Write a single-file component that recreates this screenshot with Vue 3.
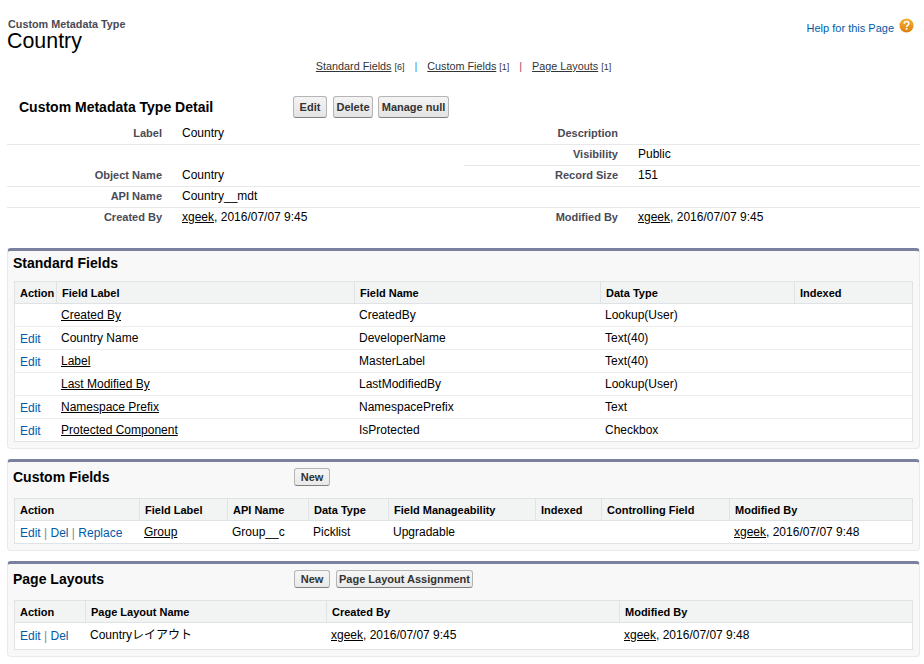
<template>
  <div class="page">
    <div class="page-head">
      <div class="titles">
        <div class="type-name">Custom Metadata Type</div>
        <h1>Country</h1>
      </div>
      <a class="help">
        Help for this Page
        <svg width="15" height="15" viewBox="0 0 16 16">
          <defs>
            <linearGradient id="helpfill" x1="0" y1="0" x2="0" y2="1">
              <stop offset="0" stop-color="#f5b335" />
              <stop offset="1" stop-color="#dc7f0c" />
            </linearGradient>
          </defs>
          <circle cx="8" cy="8" r="7.5" fill="url(#helpfill)" />
          <path d="M5.6 6.2c0-1.5 1.1-2.4 2.5-2.4s2.4.9 2.4 2.1c0 1.9-2.4 1.9-2.4 3.7" fill="none" stroke="#fff" stroke-width="1.7" />
          <rect x="7.1" y="10.6" width="1.9" height="1.9" fill="#fff" />
        </svg>
      </a>
    </div>

    <div class="jump">
      <span><a>Standard Fields</a> <small>[6]</small></span>
      <i class="sep">|</i>
      <span><a>Custom Fields</a> <small>[1]</small></span>
      <i class="sep red">|</i>
      <span><a>Page Layouts</a> <small>[1]</small></span>
    </div>

    <div class="detail-head">
      <h2>Custom Metadata Type Detail</h2>
      <div class="btns">
        <button>Edit</button>
        <button>Delete</button>
        <button>Manage null</button>
      </div>
    </div>

    <div class="detail">
      <div v-for="row in detailRows" :key="row.left[0] + row.right[0]" class="detail-row">
        <div class="cell" :class="{ line: row.leftLine }">
          <span class="lbl">{{ row.left[0] }}</span>
          <span class="val">
            <template v-if="row.left[2]"><a>xgeek</a>, </template>{{ row.left[1] }}
          </span>
        </div>
        <div class="cell right" :class="{ line: row.rightLine }">
          <span class="lbl">{{ row.right[0] }}</span>
          <span class="val">
            <template v-if="row.right[2]"><a>xgeek</a>, </template>{{ row.right[1] }}
          </span>
        </div>
      </div>
    </div>

    <section v-for="p in panels" :key="p.title" class="panel" :class="p.cls">
      <div class="panel-head">
        <h3>{{ p.title }}</h3>
        <div v-if="p.buttons" class="panel-btns">
          <button v-for="b in p.buttons" :key="b">{{ b }}</button>
        </div>
      </div>
      <div class="grid" :style="{ gridTemplateColumns: p.cols }">
        <div v-for="h in p.headers" :key="h" class="th">{{ h }}</div>
        <template v-for="(row, i) in p.rows" :key="i">
          <div
            v-for="(c, j) in row"
            :key="j"
            class="td"
            :class="{ last: i === p.rows.length - 1, 'td-actions': c.actions }"
          >
            <template v-if="c.actions">
              <template v-for="(a, k) in c.actions" :key="a">
                <span v-if="k > 0" class="pipe"> | </span><a class="act">{{ a }}</a>
              </template>
            </template>
            <template v-else>
              <a v-if="c.ul" class="ul">{{ c.ul }}</a>{{ c.text }}
            </template>
          </div>
        </template>
      </div>
    </section>
  </div>
</template>

<script setup>
const detailRows = [
  { left: ['Label', 'Country'], right: ['Description', ''], leftLine: true, rightLine: true },
  { left: ['', ''], right: ['Visibility', 'Public'], leftLine: false, rightLine: true },
  { left: ['Object Name', 'Country'], right: ['Record Size', '151'], leftLine: true, rightLine: true },
  { left: ['API Name', 'Country__mdt'], right: ['', ''], leftLine: true, rightLine: true },
  { left: ['Created By', '2016/07/07 9:45', true], right: ['Modified By', '2016/07/07 9:45', true] }
]

const t = (text) => ({ text })
const u = (ul) => ({ ul })
const empty = t('')
const edit = { actions: ['Edit'] }
const user = (time) => ({ ul: 'xgeek', text: ', 2016/07/07 ' + time })

const panels = [
  {
    title: 'Standard Fields',
    cls: 'standard',
    cols: '41px 298px 246px 194px 1fr',
    headers: ['Action', 'Field Label', 'Field Name', 'Data Type', 'Indexed'],
    rows: [
      [empty, u('Created By'), t('CreatedBy'), t('Lookup(User)'), empty],
      [edit, t('Country Name'), t('DeveloperName'), t('Text(40)'), empty],
      [edit, u('Label'), t('MasterLabel'), t('Text(40)'), empty],
      [empty, u('Last Modified By'), t('LastModifiedBy'), t('Lookup(User)'), empty],
      [edit, u('Namespace Prefix'), t('NamespacePrefix'), t('Text'), empty],
      [edit, u('Protected Component'), t('IsProtected'), t('Checkbox'), empty]
    ]
  },
  {
    title: 'Custom Fields',
    cls: 'custom',
    buttons: ['New'],
    cols: '124px 88px 81px 80px 147px 66px 128px 1fr',
    headers: ['Action', 'Field Label', 'API Name', 'Data Type', 'Field Manageability', 'Indexed', 'Controlling Field', 'Modified By'],
    rows: [
      [{ actions: ['Edit', 'Del', 'Replace'] }, u('Group'), t('Group__c'), t('Picklist'), t('Upgradable'), empty, empty, user('9:48')]
    ]
  },
  {
    title: 'Page Layouts',
    cls: 'layouts',
    buttons: ['New', 'Page Layout Assignment'],
    cols: '70px 241px 293px 1fr',
    headers: ['Action', 'Page Layout Name', 'Created By', 'Modified By'],
    rows: [
      [{ actions: ['Edit', 'Del'] }, t('Countryレイアウト'), user('9:45'), user('9:48')]
    ]
  }
]
</script>

<style>
body {
  background: #fff;
}
</style>

<style scoped>
.page {
  width: 924px;
  height: 664px;
  overflow: hidden;
  box-sizing: border-box;
  padding: 18px 4px 0 7px;
  font-family: "Liberation Sans", "Noto Sans CJK JP", sans-serif;
  font-size: 12px;
  color: #000;
}

.page-head {
  display: flex;
  justify-content: space-between;
  height: 36px;
}

.type-name {
  font-size: 10.8px;
  font-weight: bold;
  line-height: 12px;
  color: #4a4a56;
  padding-left: 1px;
}

h1 {
  margin: 0;
  font-size: 21.4px;
  font-weight: normal;
  line-height: 23px;
}

.help {
  display: flex;
  align-items: flex-start;
  gap: 5px;
  color: #015ba7;
  font-size: 11px;
  line-height: 20px;
  margin-right: 6px;
}

.jump {
  display: flex;
  justify-content: center;
  align-items: center;
  height: 14px;
  margin-top: 5px;
  font-size: 10.8px;
  color: #333435;
}

.jump a {
  text-decoration: underline;
}

.jump small {
  font-size: 9px;
}

.sep {
  font-style: normal;
  color: #3c88c4;
  margin: 0 10px;
}

.sep.red {
  color: #a34b5c;
}

.detail-head {
  display: flex;
  align-items: center;
  height: 22px;
  margin-top: 23px;
  padding-left: 12px;
}

h2 {
  margin: 0;
  width: 274px;
  font-size: 14px;
  font-weight: bold;
}

.btns,
.panel-btns {
  display: flex;
  gap: 6px;
}

button {
  height: 22px;
  padding: 0;
  border: 1px solid #b5b5b5;
  border-bottom-color: #7f7f7f;
  border-radius: 3px;
  background: linear-gradient(#f4f4f4, #e4e4e4);
  font-family: inherit;
  font-size: 11px;
  font-weight: bold;
  color: #333;
  white-space: nowrap;
}

.btns button:nth-child(1) {
  width: 34px;
}

.btns button:nth-child(2) {
  width: 40px;
}

.btns button:nth-child(3) {
  width: 71px;
  margin-left: -1px;
}

.detail {
  margin-top: 6px;
  width: 913px;
}

.detail-row {
  display: grid;
  grid-template-columns: 457px 456px;
}

.cell {
  display: flex;
  height: 21px;
  box-sizing: border-box;
  align-items: flex-start;
}

.cell.line {
  border-bottom: 1px solid #e8e8e8;
}

.lbl {
  width: 155px;
  text-align: right;
  font-size: 11px;
  font-weight: bold;
  line-height: 18px;
  color: #4a4a56;
  flex: none;
}

.val {
  margin-left: 20px;
  line-height: 19px;
}

.right .lbl {
  width: 154px;
}

.val a,
.ul {
  text-decoration: underline;
}

.panel {
  box-sizing: border-box;
  width: 913px;
  border: 1px solid #eaeaea;
  border-top: 3px solid #7a809e;
  border-radius: 4px;
  background: #f8f8f8;
  padding: 0 6px;
}

.standard {
  margin-top: 19px;
  height: 201px;
}

.custom {
  margin-top: 10px;
  height: 92px;
}

.layouts {
  margin-top: 10px;
  height: 96px;
}

.panel-head {
  display: flex;
  align-items: center;
  height: 30px;
}

.standard .panel-head {
  height: 24px;
}

h3 {
  margin: 0 0 0 -1px;
  width: 281px;
  font-size: 14px;
  font-weight: bold;
}

.panel-btns button {
  height: 18px;
  padding: 0 2px;
  min-width: 36px;
  background: linear-gradient(#f6f6f6, #e9e9e9);
}

.grid {
  display: grid;
  margin-top: 6px;
  background: #fff;
  border: 1px solid #e0e3e5;
  box-sizing: border-box;
  width: 899px;
}

.th {
  height: 22px;
  box-sizing: border-box;
  padding-left: 5px;
  background: #f2f3f3;
  border-bottom: 1px solid #e0e3e5;
  border-left: 1px solid #e0e3e5;
  font-size: 11px;
  font-weight: bold;
  line-height: 23px;
}

.th:first-child {
  border-left: 0;
}

.td {
  height: 23px;
  box-sizing: border-box;
  padding-left: 5px;
  border-bottom: 1px solid #ececec;
  line-height: 22px;
  white-space: nowrap;
}

.td.last {
  height: 22px;
  border-bottom: 0;
}

.td-actions {
  padding-top: 1px;
}

.layouts .td {
  height: 26px;
  line-height: 25px;
}

.act {
  color: #015ba7;
}

.pipe {
  color: #888;
}
</style>
